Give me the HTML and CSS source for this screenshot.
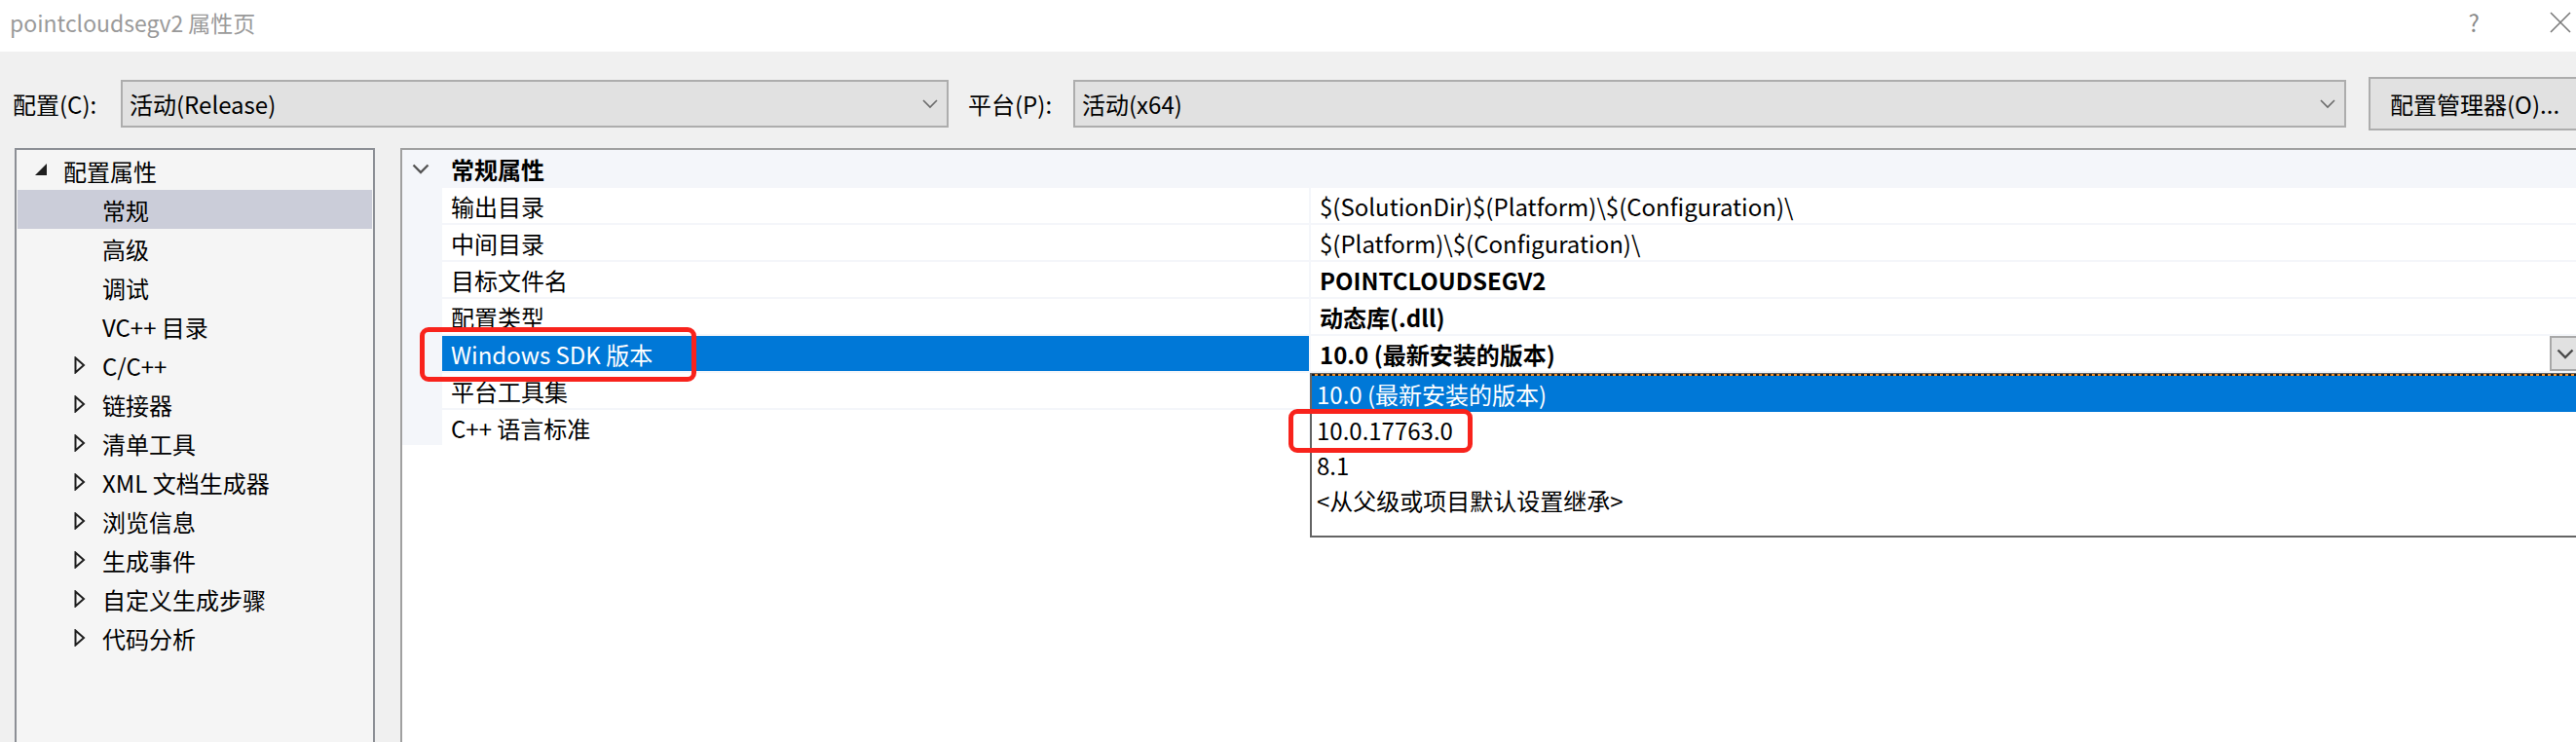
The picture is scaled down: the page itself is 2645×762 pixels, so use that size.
FILE: index.html
```html
<!DOCTYPE html>
<html lang="zh-CN">
<head>
    <meta charset="UTF-8">
    <title>pointcloudsegv2 属性页</title>
    <link rel="stylesheet" href="styles.css">
</head>
<body>
    <div class="titlebar">
        <span class="title">pointcloudsegv2 属性页</span>
        <div class="title-controls">
            <span class="help">?</span>
            <svg class="close" width="22" height="22" viewBox="0 0 22 22">
                <path d="M1 1 L21 21 M21 1 L1 21" stroke="#7a7a7a" stroke-width="1.6" fill="none"/>
            </svg>
        </div>
    </div>

    <div class="toolbar">
        <span class="tb-label">配置(C):</span>
        <div class="combo combo-config">
            <span>活动(Release)</span>
            <svg class="chev" width="16" height="10" viewBox="0 0 16 10"><polyline points="1,1 8,8 15,1" fill="none" stroke="#6b6b6b" stroke-width="1.6"/></svg>
        </div>
        <span class="tb-label tb-label-platform">平台(P):</span>
        <div class="combo combo-platform">
            <span>活动(x64)</span>
            <svg class="chev" width="16" height="10" viewBox="0 0 16 10"><polyline points="1,1 8,8 15,1" fill="none" stroke="#6b6b6b" stroke-width="1.6"/></svg>
        </div>
        <button class="manager-btn">配置管理器(O)...</button>
    </div>

    <div class="main">
        <div class="tree">
            <div class="tree-row lvl0">
                <span class="twisty"><svg width="13" height="12" viewBox="0 0 13 12"><polygon points="12,0 12,12 0,12" fill="#1e1e1e"/></svg></span>
                <span>配置属性</span>
            </div>
            <div class="tree-row lvl1 selected"><span class="twisty"></span><span>常规</span></div>
            <div class="tree-row lvl1"><span class="twisty"></span><span>高级</span></div>
            <div class="tree-row lvl1"><span class="twisty"></span><span>调试</span></div>
            <div class="tree-row lvl1"><span class="twisty"></span><span>VC++ 目录</span></div>
            <div class="tree-row lvl1"><span class="twisty"><svg class="expander" width="12" height="18" viewBox="0 0 12 18"><polygon points="1.5,1.5 10,9 1.5,16.5" fill="none" stroke="#1e1e1e" stroke-width="2"/></svg></span><span>C/C++</span></div>
            <div class="tree-row lvl1"><span class="twisty"><svg class="expander" width="12" height="18" viewBox="0 0 12 18"><polygon points="1.5,1.5 10,9 1.5,16.5" fill="none" stroke="#1e1e1e" stroke-width="2"/></svg></span><span>链接器</span></div>
            <div class="tree-row lvl1"><span class="twisty"><svg class="expander" width="12" height="18" viewBox="0 0 12 18"><polygon points="1.5,1.5 10,9 1.5,16.5" fill="none" stroke="#1e1e1e" stroke-width="2"/></svg></span><span>清单工具</span></div>
            <div class="tree-row lvl1"><span class="twisty"><svg class="expander" width="12" height="18" viewBox="0 0 12 18"><polygon points="1.5,1.5 10,9 1.5,16.5" fill="none" stroke="#1e1e1e" stroke-width="2"/></svg></span><span>XML 文档生成器</span></div>
            <div class="tree-row lvl1"><span class="twisty"><svg class="expander" width="12" height="18" viewBox="0 0 12 18"><polygon points="1.5,1.5 10,9 1.5,16.5" fill="none" stroke="#1e1e1e" stroke-width="2"/></svg></span><span>浏览信息</span></div>
            <div class="tree-row lvl1"><span class="twisty"><svg class="expander" width="12" height="18" viewBox="0 0 12 18"><polygon points="1.5,1.5 10,9 1.5,16.5" fill="none" stroke="#1e1e1e" stroke-width="2"/></svg></span><span>生成事件</span></div>
            <div class="tree-row lvl1"><span class="twisty"><svg class="expander" width="12" height="18" viewBox="0 0 12 18"><polygon points="1.5,1.5 10,9 1.5,16.5" fill="none" stroke="#1e1e1e" stroke-width="2"/></svg></span><span>自定义生成步骤</span></div>
            <div class="tree-row lvl1"><span class="twisty"><svg class="expander" width="12" height="18" viewBox="0 0 12 18"><polygon points="1.5,1.5 10,9 1.5,16.5" fill="none" stroke="#1e1e1e" stroke-width="2"/></svg></span><span>代码分析</span></div>
        </div>

        <div class="grid">
            <div class="grid-list">
                <div class="grid-header">
                    <span class="header-chev"><svg width="18" height="11" viewBox="0 0 18 11"><polyline points="1.5,1.5 9,9 16.5,1.5" fill="none" stroke="#555" stroke-width="2.4"/></svg></span>
                    <span class="header-text">常规属性</span>
                </div>
                <div class="grid-rows">
                    <div class="prop-row">
                        <div class="prop-name">输出目录</div>
                        <div class="prop-value">$(SolutionDir)$(Platform)\$(Configuration)\</div>
                    </div>
                    <div class="prop-row">
                        <div class="prop-name">中间目录</div>
                        <div class="prop-value">$(Platform)\$(Configuration)\</div>
                    </div>
                    <div class="prop-row">
                        <div class="prop-name">目标文件名</div>
                        <div class="prop-value bold">POINTCLOUDSEGV2</div>
                    </div>
                    <div class="prop-row">
                        <div class="prop-name">配置类型</div>
                        <div class="prop-value bold">动态库(.dll)</div>
                    </div>
                    <div class="prop-row active">
                        <div class="prop-name">Windows SDK 版本</div>
                        <div class="prop-value bold">
                            <span>10.0 (最新安装的版本)</span>
                            <span class="drop-btn"><svg width="18" height="11" viewBox="0 0 18 11"><polyline points="1.5,1.5 9,9 16.5,1.5" fill="none" stroke="#4a4a4a" stroke-width="2.4"/></svg></span>
                        </div>
                    </div>
                    <div class="prop-row">
                        <div class="prop-name">平台工具集</div>
                        <div class="prop-value"></div>
                    </div>
                    <div class="prop-row">
                        <div class="prop-name">C++ 语言标准</div>
                        <div class="prop-value"></div>
                    </div>
                </div>
            </div>
        </div>
    </div>

    <div class="dropdown-list">
        <div class="focus-line"></div>
        <div class="drop-item picked">10.0 (最新安装的版本)</div>
        <div class="drop-item">10.0.17763.0</div>
        <div class="drop-item">8.1</div>
        <div class="drop-item">&lt;从父级或项目默认设置继承&gt;</div>
    </div>

    <div class="mark mark-sdk"></div>
    <div class="mark mark-version"></div>
</body>
</html>
```

FILE: styles.css
```css
html, body {
    margin: 0;
    height: 762px;
    overflow: hidden;
}

body {
    width: 2645px;
    position: relative;
    background: #f0f0f0;
    font-family: "Noto Sans CJK SC", "Noto Sans", sans-serif;
    font-size: 24px;
    color: #000;
}

/* title bar */
.titlebar {
    height: 53px;
    background: #fff;
    display: flex;
    align-items: center;
    justify-content: space-between;
    padding-left: 10px;
    box-sizing: border-box;
}

.title {
    color: #9a9a9a;
    font-size: 23px;
    margin-top: -8px;
}

.title-controls {
    display: flex;
    align-items: center;
    margin-top: -8px;
}

.help {
    color: #8a8a8a;
    font-size: 24px;
    margin-right: 72px;
}

.close {
    margin-right: 5px;
}

/* toolbar */
.toolbar {
    height: 99px;
    display: flex;
    align-items: center;
    padding: 8px 0 0 13px;
    box-sizing: border-box;
}

.tb-label {
    width: 111px;
    flex-shrink: 0;
}

.tb-label-platform {
    margin-left: 20px;
    width: 108px;
}

.combo {
    height: 49px;
    box-sizing: border-box;
    background: #e1e1e1;
    border: 2px solid #adadad;
    display: flex;
    align-items: center;
    justify-content: space-between;
    padding: 0 9px 0 7px;
    flex-shrink: 0;
}

.combo-config {
    width: 850px;
}

.combo-platform {
    width: 1307px;
}

.manager-btn {
    margin-left: 23px;
    width: 230px;
    height: 55px;
    flex-shrink: 0;
    background: #e1e1e1;
    border: 2px solid #adadad;
    font-family: inherit;
    font-size: 24px;
    color: #000;
    text-align: left;
    padding: 0 0 0 20px;
}

/* main area */
.main {
    display: flex;
    height: 610px;
}

.tree {
    margin-left: 15px;
    width: 370px;
    flex-shrink: 0;
    box-sizing: border-box;
    background: #f5f5f5;
    border: 2px solid #8c8f95;
    border-bottom: none;
    padding-top: 1px;
}

.tree-row {
    height: 40px;
    display: flex;
    align-items: center;
    margin: 0 1px;
}

.tree-row.lvl0 {
    padding-left: 18px;
}

.tree-row.lvl1 {
    padding-left: 58px;
}

.tree-row.selected {
    background: #cbcdd9;
}

.twisty {
    width: 29px;
    flex-shrink: 0;
    display: flex;
    align-items: center;
}

.lvl0 .twisty svg {
    margin-top: -2px;
}

.grid {
    margin-left: 26px;
    margin-right: -5px;
    flex: 1;
    background: #fff;
    border-top: 2px solid #a0a0a0;
    border-left: 2px solid #a0a0a0;
}

.grid-list {
    background: #f4f6fa;
}

.grid-header {
    height: 39px;
    display: flex;
    align-items: center;
}

.header-chev {
    width: 50px;
    padding-left: 10px;
    box-sizing: border-box;
    display: flex;
    align-items: center;
}

.header-text {
    font-weight: bold;
}

.grid-rows {
    margin-left: 41px;
}

.prop-row {
    display: flex;
    height: 36px;
    margin-bottom: 2px;
}

.prop-row:last-child {
    margin-bottom: 0;
}

.prop-name {
    width: 890px;
    flex-shrink: 0;
    background: #fff;
    padding-left: 9px;
    box-sizing: border-box;
    display: flex;
    align-items: center;
}

.prop-value {
    flex: 1;
    margin-left: 2px;
    background: #fff;
    padding-left: 9px;
    display: flex;
    align-items: center;
    justify-content: space-between;
}

.prop-value.bold {
    font-weight: bold;
}

.prop-row.active .prop-name {
    background: #0078d7;
    color: #fff;
}

.drop-btn {
    width: 32px;
    height: 36px;
    box-sizing: border-box;
    background: #e1e1e1;
    border: 2px solid #a8a8a8;
    display: flex;
    align-items: center;
    justify-content: center;
}

/* open dropdown of the SDK version */
.dropdown-list {
    position: absolute;
    left: 1345px;
    top: 383px;
    right: -5px;
    height: 169px;
    box-sizing: border-box;
    background: #fff;
    border: 2px solid #646464;
    border-top-width: 1px;
}

.focus-line {
    height: 2px;
    background: repeating-linear-gradient(90deg, #1a1a1a 0 3px, #f0902a 3px 6px);
}

.drop-item {
    height: 36px;
    display: flex;
    align-items: center;
    padding-left: 5px;
}

.drop-item.picked {
    height: 37px;
    background: #0078d7;
    color: #fff;
}

/* red annotation boxes */
.mark {
    position: absolute;
    border: 5px solid #f8231c;
    border-radius: 9px;
    box-sizing: border-box;
}

.mark-sdk {
    left: 431px;
    top: 336px;
    width: 284px;
    height: 56px;
}

.mark-version {
    left: 1323px;
    top: 420px;
    width: 189px;
    height: 45px;
}
```
